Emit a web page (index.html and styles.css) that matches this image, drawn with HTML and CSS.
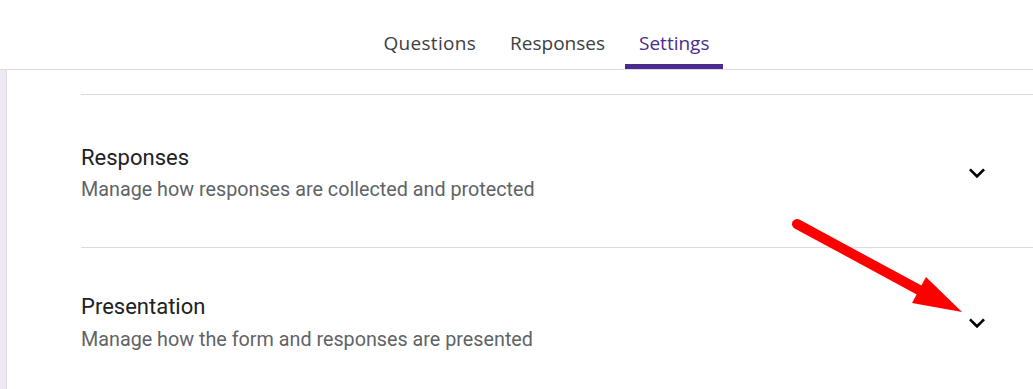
FILE: index.html
```html
<!DOCTYPE html>
<html>
<head>
<meta charset="utf-8">
<link rel="stylesheet" href="styles.css">
</head>
<body>
<header class="topbar">
  <nav class="tabs">
    <div class="tab">Questions</div>
    <div class="tab">Responses</div>
    <div class="tab active">Settings</div>
  </nav>
</header>
<div class="main">
  <div class="strip"></div>
  <div class="content">
    <div class="divider"></div>
    <section class="section">
      <div class="text">
        <div class="title">Responses</div>
        <div class="subtitle">Manage how responses are collected and protected</div>
      </div>
      <div class="chev"><svg viewBox="0 0 24 24" width="32" height="32"><path d="M16.59 8.59L12 13.17 7.41 8.59 6 10l6 6 6-6z" fill="#000"/></svg></div>
    </section>
    <section class="section second">
      <div class="text">
        <div class="title">Presentation</div>
        <div class="subtitle">Manage how the form and responses are presented</div>
      </div>
      <div class="chev"><svg viewBox="0 0 24 24" width="32" height="32"><path d="M16.59 8.59L12 13.17 7.41 8.59 6 10l6 6 6-6z" fill="#000"/></svg></div>
    </section>
  </div>
</div>
<svg class="arrow" width="1033" height="389" viewBox="0 0 1033 389">
  <line x1="797" y1="224" x2="921" y2="291" stroke="#ff0000" stroke-width="10" stroke-linecap="round"/>
  <polygon points="926,277 912,303 962,312" fill="#ff0000"/>
</svg>
</body>
</html>
```
FILE: styles.css
```css
body {
  margin: 0;
  background: #fff;
  font-family: Roboto, "Liberation Sans", sans-serif;
  position: relative;
  width: 1033px;
  height: 389px;
  overflow: hidden;
}
.topbar {
  height: 69px;
  border-bottom: 1px solid #dadce0;
  display: flex;
  justify-content: center;
  align-items: flex-end;
}
.tabs {
  display: flex;
  gap: 6px;
  margin-left: 60px;
}
.tab {
  font-family: "Open Sans", sans-serif;
  font-weight: 500;
  font-size: 19px;
  color: #3c4043;
  padding: 0 14px;
  height: 46px;
  line-height: 40px;
  box-sizing: border-box;
  border-bottom: 5px solid transparent;
}
.tab:first-child {
  letter-spacing: 0.3px;
}
.tab.active {
  color: #4a2c8f;
  border-bottom-color: #4a2c8f;
  border-radius: 4px 4px 0 0;
}
.main {
  display: flex;
  height: 319px;
}
.strip {
  width: 6px;
  background: #ede7f6;
  border-right: 1px solid #dadce0;
}
.content {
  flex: 1;
  padding-left: 74px;
  padding-top: 24px;
}
.divider {
  border-top: 1px solid #dadce0;
}
.section {
  display: flex;
  align-items: center;
  justify-content: space-between;
  padding: 49px 40px 43px 0;
  border-bottom: 1px solid #dadce0;
}
.section.second {
  padding-top: 45px;
  border-bottom: none;
}
.title {
  font-size: 22px;
  line-height: 28px;
  color: #202124;
}
.subtitle {
  font-size: 19.75px;
  line-height: 28px;
  color: #5f6368;
  margin-top: 4px;
}
.second .subtitle {
  margin-top: 5px;
}
.chev {
  width: 32px;
  height: 32px;
  margin-top: -2px;
}
.second .chev {
  margin-top: -2px;
}
.arrow {
  position: absolute;
  left: 0;
  top: 0;
  pointer-events: none;
}
```
